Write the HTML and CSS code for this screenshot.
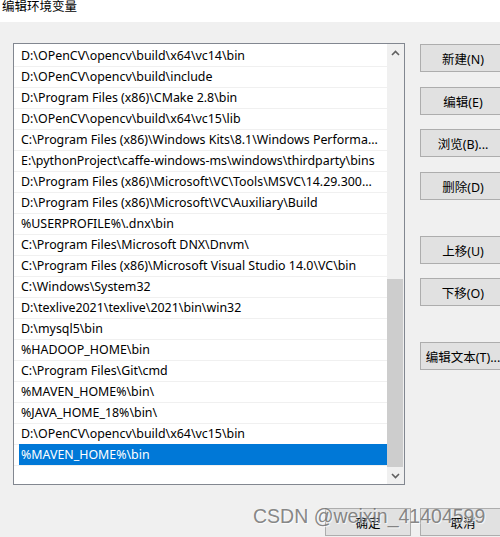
FILE: index.html
```html
<!DOCTYPE html>
<html lang="zh-CN">
<head>
  <meta charset="UTF-8" />
  <title>编辑环境变量</title>
  <link rel="stylesheet" href="styles.css">
</head>
<body>
  <div class="titlebar">编辑环境变量</div>

  <div class="dialog">
    <div class="pathbox">
      <ul class="path-list" id="pathList">
        <!-- rows inserted by JS -->
      </ul>
      <div class="scrollbar">
        <div class="arrow">
          <svg width="9" height="6" viewBox="0 0 9 6"><path d="M1 5 L4.5 1.5 L8 5" fill="none" stroke="#606060" stroke-width="1.6"/></svg>
        </div>
        <div class="track"><div class="thumb"></div></div>
        <div class="arrow">
          <svg width="9" height="6" viewBox="0 0 9 6"><path d="M1 1 L4.5 4.5 L8 1" fill="none" stroke="#606060" stroke-width="1.6"/></svg>
        </div>
      </div>
    </div>

    <div class="side-buttons">
      <button class="btn">新建(N)</button>
      <button class="btn gap-s">编辑(E)</button>
      <button class="btn gap-xs">浏览(B)...</button>
      <button class="btn gap-s">删除(D)</button>
      <button class="btn gap-l">上移(U)</button>
      <button class="btn gap-xs">下移(O)</button>
      <button class="btn gap-l">编辑文本(T)...</button>
    </div>
  </div>

  <div class="footer">
    <button class="btn">确定</button>
    <button class="btn">取消</button>
  </div>

  <div class="watermark">CSDN @weixin_41404599</div>

  <script>
    const paths = [
      'D:\\OPenCV\\opencv\\build\\x64\\vc14\\bin',
      'D:\\OPenCV\\opencv\\build\\include',
      'D:\\Program Files (x86)\\CMake 2.8\\bin',
      'D:\\OPenCV\\opencv\\build\\x64\\vc15\\lib',
      'C:\\Program Files (x86)\\Windows Kits\\8.1\\Windows Performa...',
      'E:\\pythonProject\\caffe-windows-ms\\windows\\thirdparty\\bins',
      'D:\\Program Files (x86)\\Microsoft\\VC\\Tools\\MSVC\\14.29.300...',
      'D:\\Program Files (x86)\\Microsoft\\VC\\Auxiliary\\Build',
      '%USERPROFILE%\\.dnx\\bin',
      'C:\\Program Files\\Microsoft DNX\\Dnvm\\',
      'C:\\Program Files (x86)\\Microsoft Visual Studio 14.0\\VC\\bin',
      'C:\\Windows\\System32',
      'D:\\texlive2021\\texlive\\2021\\bin\\win32',
      'D:\\mysql5\\bin',
      '%HADOOP_HOME\\bin',
      'C:\\Program Files\\Git\\cmd',
      '%MAVEN_HOME%\\bin\\',
      '%JAVA_HOME_18%\\bin\\',
      'D:\\OPenCV\\opencv\\build\\x64\\vc15\\bin',
      '%MAVEN_HOME%\\bin'
    ];
    const selected = paths.length - 1;

    const list = document.getElementById('pathList');
    paths.forEach((p, i) => {
      const li = document.createElement('li');
      li.className = 'path-row';
      const span = document.createElement('span');
      span.className = i === selected ? 'path-text selected' : 'path-text';
      span.textContent = p;
      li.appendChild(span);
      list.appendChild(li);
    });
  </script>
</body>
</html>
```

FILE: styles.css
```css
body {
  margin: 0;
  width: 500px;
  height: 537px;
  overflow: hidden;
  background: #f0f0f0;
  font-family: "Noto Sans", "Noto Sans CJK SC", sans-serif;
  font-size: 12.4px;
  color: #000;
  position: relative;
}
.titlebar {
  background: #fff;
  height: 21px;
  padding-left: 2px;
  font-size: 12.5px;
  line-height: 12px;
  padding-top: 1px;
}
.dialog {
  display: flex;
  align-items: flex-start;
  margin-top: 21px;
  padding-left: 13px;
}
.pathbox {
  width: 390px;
  height: 440px;
  border: 1px solid #828790;
  background: #fff;
  display: flex;
  flex-shrink: 0;
}
.path-list {
  list-style: none;
  margin: 0;
  padding: 2px 0 0 0;
  width: 373px;
  overflow: hidden;
}
.path-row {
  height: 20px;
  border-bottom: 1px solid #f0f0f0;
  display: flex;
}
.path-text {
  flex: 1;
  margin-left: 5px;
  padding-left: 2px;
  line-height: 20px;
  white-space: nowrap;
  overflow: hidden;
}
.path-text.selected {
  background: #0078d7;
  color: #fff;
  margin-top: -1px;
  height: 21px;
  line-height: 21px;
}
.scrollbar {
  width: 17px;
  background: #f0f0f0;
  display: flex;
  flex-direction: column;
}
.arrow {
  height: 17px;
  display: flex;
  align-items: center;
  justify-content: center;
}
.track {
  flex: 1;
  display: flex;
  flex-direction: column;
  justify-content: flex-end;
}
.thumb {
  height: 188px;
  width: 16px;
  background: #cdcdcd;
}
.side-buttons {
  display: flex;
  flex-direction: column;
  margin-left: 15px;
  padding-top: 1px;
}
.btn {
  width: 86px;
  height: 28px;
  flex-shrink: 0;
  background: #e1e1e1;
  border: 1px solid #adadad;
  font-family: "Noto Sans", "Noto Sans CJK SC", sans-serif;
  font-size: 12.5px;
  color: #000;
  padding: 0;
  margin: 0;
}
.side-buttons .gap-xs {
  margin-top: 14px;
}
.side-buttons .gap-s {
  margin-top: 15px;
}
.side-buttons .gap-l {
  margin-top: 36px;
}
.footer {
  display: flex;
  gap: 9px;
  margin-top: 23px;
  padding-left: 325px;
}
.watermark {
  position: absolute;
  left: 253px;
  top: 505px;
  font-family: "Liberation Sans", Arial, sans-serif;
  font-size: 19.5px;
  color: rgba(105, 105, 105, 0.8);
  text-shadow: 1px 1px 1px rgba(255, 255, 255, 0.8);
  white-space: nowrap;
}
```
